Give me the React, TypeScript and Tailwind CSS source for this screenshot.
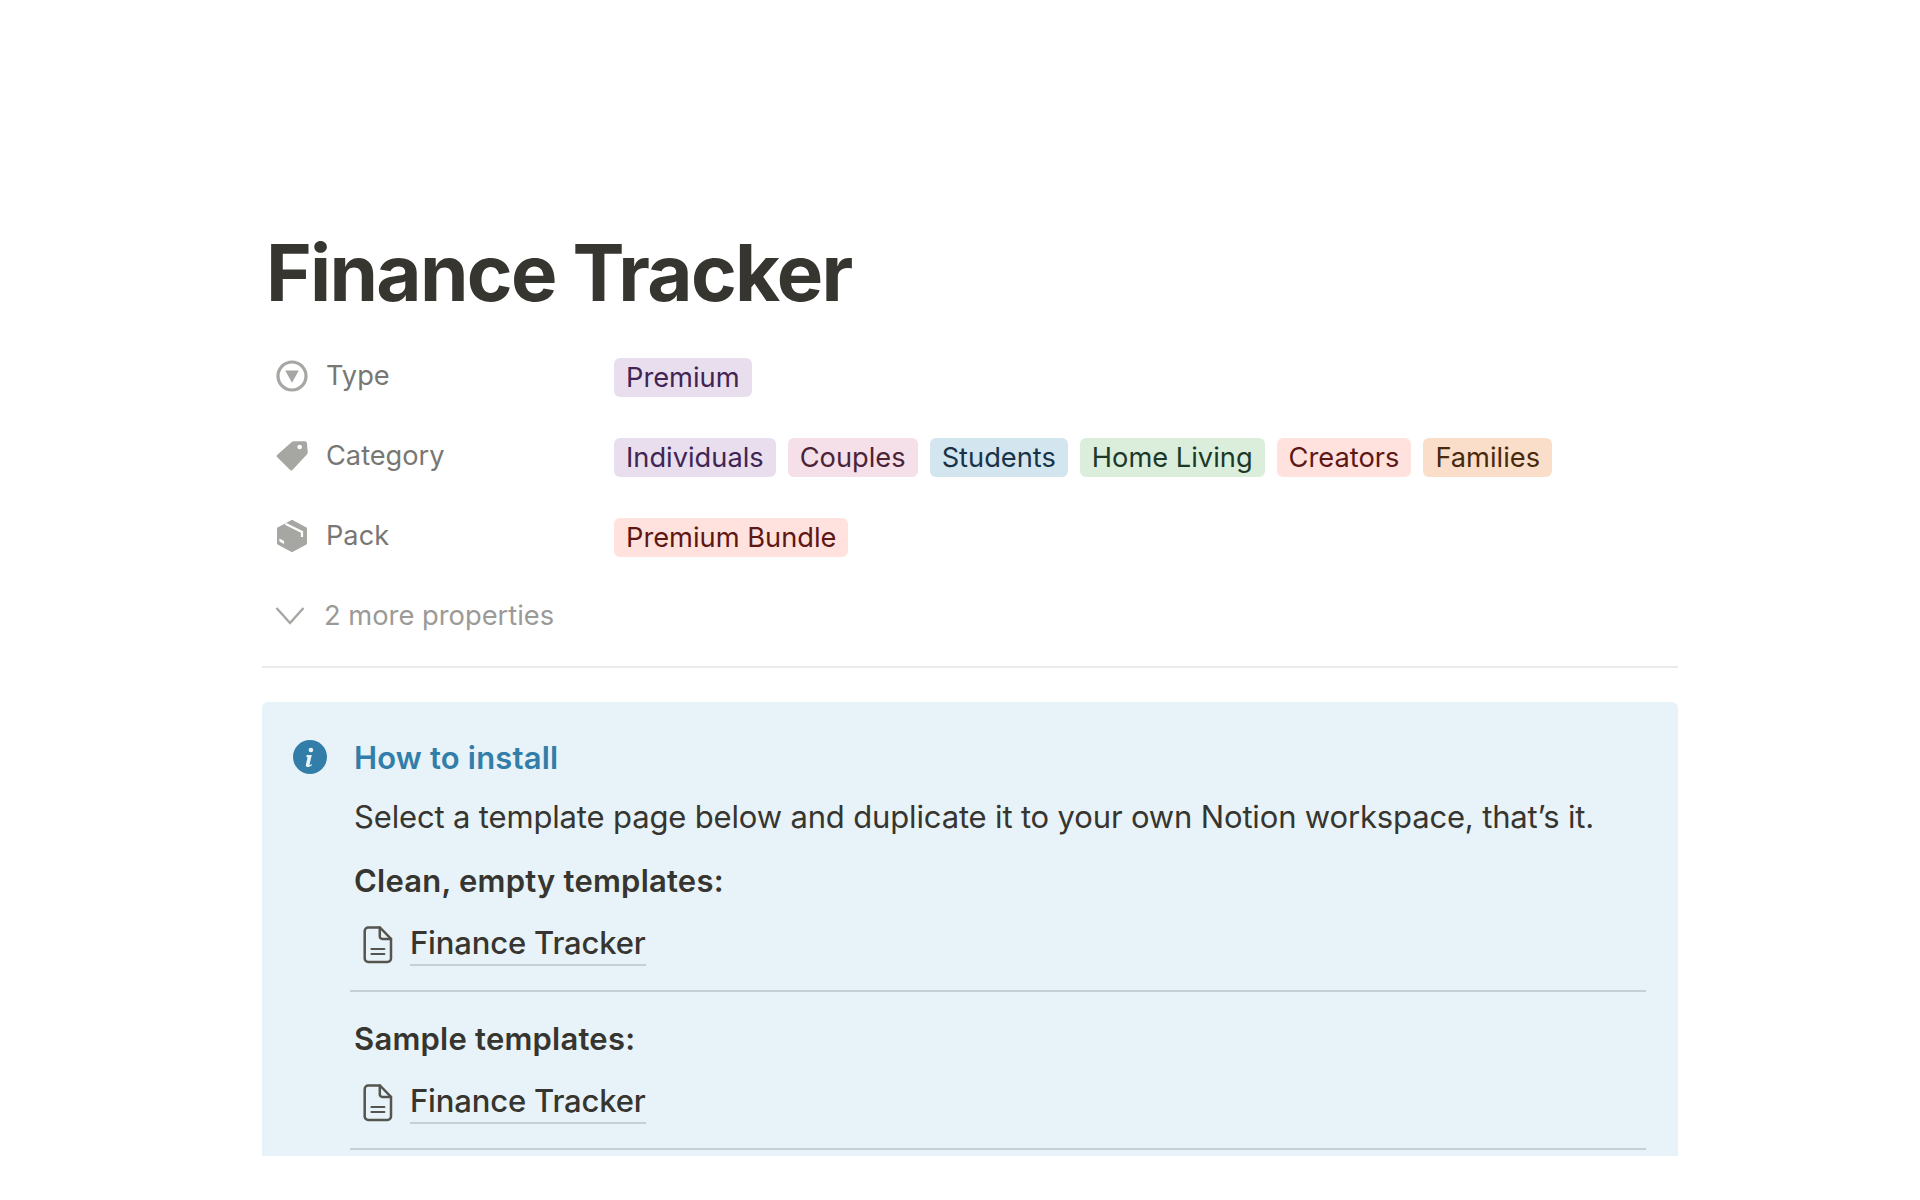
const INTER = "font-['Inter',_'Liberation_Sans',_sans-serif]";

const categories = [
  { label: "Individuals", bg: "bg-[#e8deee]", fg: "text-[#412454]" },
  { label: "Couples", bg: "bg-[#f5e0e9]", fg: "text-[#4c2337]" },
  { label: "Students", bg: "bg-[#d3e5ef]", fg: "text-[#183347]" },
  { label: "Home Living", bg: "bg-[#dbeddb]", fg: "text-[#1c3829]" },
  { label: "Creators", bg: "bg-[#ffe2dd]", fg: "text-[#5d1715]" },
  { label: "Families", bg: "bg-[#fadec9]", fg: "text-[#49290e]" },
];

function Chip({ label, bg, fg }: { label: string; bg: string; fg: string }) {
  return (
    <span className={`mt-[2px] flex h-[39px] items-center rounded-[6px] px-3 pt-[3px] text-[27.25px] ${bg} ${fg}`}>
      {label}
    </span>
  );
}

function TypeIcon() {
  return (
    <svg viewBox="0 0 32 32" className="h-8 w-8" fill="none">
      <circle cx="16" cy="16" r="14" stroke="#a6a6a2" strokeWidth="3.2" />
      <path d="M9.2 10.6h13.6L16 22.8z" fill="#a6a6a2" />
    </svg>
  );
}

function TagIcon() {
  return (
    <svg viewBox="0 0 33 32" className="h-8 w-[33px]">
      <path
        fillRule="evenodd"
        d="M18.4.7h11.4c1.2 0 2 .8 2.1 2l.8 9.2c.1 1-.2 1.8-.9 2.5L17.2 30.3c-.8.8-2.1.8-2.9 0L1.3 17.4c-.8-.8-.8-2 0-2.8L16.3 1.5c.6-.6 1.3-.8 2.1-.8zM24.4 4.3a2.4 2.4 0 1 0 0 4.8 2.4 2.4 0 0 0 0-4.8z"
        fill="#a6a6a2"
      />
    </svg>
  );
}

function PackIcon() {
  return (
    <svg viewBox="0 0 32 32" className="h-8 w-8">
      <path d="M16 1 30 8.5V23.5L16 31 2 23.5V8.5z" fill="#a6a6a2" stroke="#a6a6a2" strokeWidth="2" strokeLinejoin="round" />
      <path d="M9.3 3.8 26 12V17" fill="none" stroke="#ffffff" strokeWidth="2.2" />
      <path d="M3.4 18.6 8 21V24L3.4 21.6z" fill="#ffffff" />
    </svg>
  );
}

function InfoIcon() {
  return (
    <svg viewBox="0 0 34 34" className="h-[34px] w-[34px]">
      <circle cx="17" cy="17" r="17" fill="#337ea9" />
      <circle cx="17.9" cy="10" r="2.3" fill="#e7f3f8" />
      <path
        d="M13.6 15h5.2l-2.2 9.2c-.2.8.3 1 .9.6l1-.7.5.7c-1 1.3-2.2 2.2-3.9 2.2-1.8 0-2.6-1-2.2-2.6l1.5-6.4c.2-.8-.1-1-1-1.1z"
        fill="#e7f3f8"
      />
    </svg>
  );
}

function DocIcon() {
  return (
    <svg viewBox="0 0 30 38" className="h-[38px] w-[30px]" fill="none" stroke="#55544f" strokeWidth="2.5" strokeLinejoin="round" strokeLinecap="round">
      <path d="M5.2 1.5H17L28 12.8V32.5a3.5 3.5 0 0 1-3.5 3.5H5.2a3.5 3.5 0 0 1-3.5-3.5V5a3.5 3.5 0 0 1 3.5-3.5z" />
      <path d="M16.8 1.5V10.5a2.4 2.4 0 0 0 2.4 2.4H28" />
      <path d="M8.4 23h13M8.4 28h13" strokeWidth="2" />
    </svg>
  );
}

function PropRow({ icon, name, children }: { icon: React.ReactNode; name: string; children: React.ReactNode }) {
  return (
    <div className="flex h-[80px] items-center">
      <div className="flex w-[352px] items-center">
        <span className="ml-[14px] flex w-8 justify-center">{icon}</span>
        <span className="ml-[18px] pt-[1px] text-[27.2px] text-[#787774]">{name}</span>
      </div>
      <div className="flex gap-3">{children}</div>
    </div>
  );
}

function PageLink({ label }: { label: string }) {
  return (
    <div className="mt-[15px] flex h-[62px] items-center">
      <span className="ml-[9px] flex w-[30px] justify-center">
        <DocIcon />
      </span>
      <span className="ml-[17px] border-b-2 border-[#c6d0d4] pb-[2px] text-[31px] leading-[38px] font-medium tracking-[-0.16px] text-[#37352f]">
        {label}
      </span>
    </div>
  );
}

export default function App() {
  return (
    <div className={`h-[1200px] overflow-hidden bg-white pl-[262px] pr-[242px] ${INTER}`}>
      <h1 className="pt-[227px] pl-[4px] text-[78px] leading-[92px] font-bold tracking-[-0.022em] text-[#37352f]">
        Finance Tracker
      </h1>
      <div className="mt-[17px]">
        <PropRow icon={<TypeIcon />} name="Type">
          <Chip label="Premium" bg="bg-[#e8deee]" fg="text-[#412454]" />
        </PropRow>
        <PropRow icon={<TagIcon />} name="Category">
          {categories.map((c) => (
            <Chip key={c.label} {...c} />
          ))}
        </PropRow>
        <PropRow icon={<PackIcon />} name="Pack">
          <Chip label="Premium Bundle" bg="bg-[#ffe2dd]" fg="text-[#5d1715]" />
        </PropRow>
        <div className="flex h-[80px] items-center">
          <svg viewBox="0 0 30 20" className="ml-[13px] h-5 w-[30px]" fill="none" stroke="#a6a6a2" strokeWidth="2.4">
            <path d="M1.5 2 15 17 28.5 2" />
          </svg>
          <span className="ml-[19px] pt-[1px] text-[27.3px] text-[#9b9a97]">2 more properties</span>
        </div>
      </div>
      <div className="mt-[10px] h-[2px] bg-[#ebebea]" />
      <div className="mt-[34px] h-[454px] overflow-hidden rounded-t-[6px] bg-[#e7f3f8] pt-[38px] pl-[31px] pr-[32px]">
        <div className="flex">
          <InfoIcon />
          <div className="ml-[27px] flex-1 text-[#37352f]">
            <div className="text-[31px] leading-[36px] font-semibold tracking-[0.17px] text-[#337ea9]">How to install</div>
            <div className="mt-[23px] text-[31px] leading-[36px] tracking-[-0.157px]">
              Select a template page below and duplicate it to your own Notion workspace, that’s it.
            </div>
            <div className="mt-[28px] text-[31px] leading-[36px] font-semibold tracking-[0.22px]">Clean, empty templates:</div>
            <PageLink label="Finance Tracker" />
            <div className="mt-[14px] -ml-[4px] h-[2px] bg-[#c6d0d4]" />
            <div className="mt-[29px] text-[31px] leading-[36px] font-semibold tracking-[0.22px]">Sample templates:</div>
            <PageLink label="Finance Tracker" />
            <div className="mt-[14px] -ml-[4px] h-[2px] bg-[#c6d0d4]" />
          </div>
        </div>
      </div>
    </div>
  );
}
